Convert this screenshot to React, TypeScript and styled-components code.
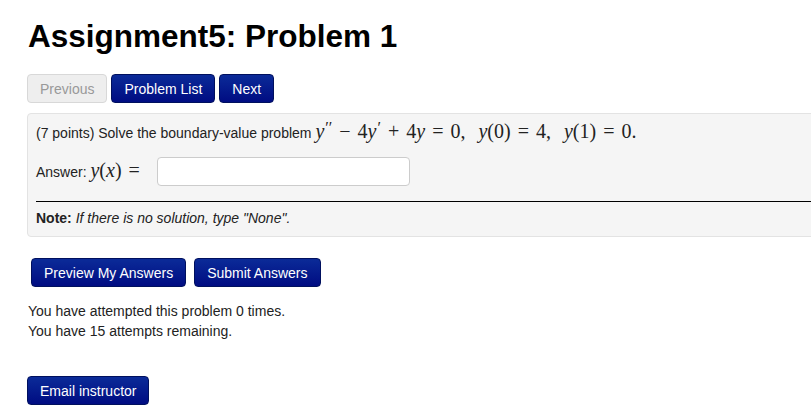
import React from 'react';
import styled, { createGlobalStyle } from 'styled-components';

const GlobalStyle = createGlobalStyle`
  html, body {
    margin: 0;
    padding: 0;
    overflow: hidden;
    background: #fff;
  }
  body {
    font-family: "Liberation Sans", Arial, sans-serif;
    font-size: 14px;
    line-height: 20px;
    color: #222;
  }
`;

const Page = styled.div`
  padding: 16px 0 0 27px;
  width: 900px;
`;

const Title = styled.h2`
  margin: 0 0 18px 1px;
  font-size: 31.5px;
  line-height: 40px;
  font-weight: bold;
  color: #000;
`;

const ButtonRow = styled.div<{ $indent?: number }>`
  display: flex;
  gap: ${(p) => (p.$indent ? 8 : 4)}px;
  margin-left: ${(p) => p.$indent || 0}px;
`;

const Button = styled.button<{ $disabled?: boolean }>`
  height: 29px;
  padding: 0 12px;
  border-radius: 4px;
  font-family: "Liberation Sans", Arial, sans-serif;
  font-size: 14px;
  line-height: 20px;
  cursor: pointer;
  border: 1px solid ${(p) => (p.$disabled ? '#d8d8d8' : '#00105e')};
  color: ${(p) => (p.$disabled ? '#999' : '#fff')};
  background: ${(p) =>
    p.$disabled ? '#eeeeee' : 'linear-gradient(to bottom, #0b2b98, #000c82)'};
`;

const ProblemBox = styled.div`
  margin-top: 10px;
  padding: 9px 8px 8px 8px;
  background: #f5f5f5;
  border: 1px solid #e3e3e3;
  border-radius: 4px;
`;

const Line = styled.p`
  margin: 0;
  height: 20px;
  line-height: 20px;
`;

const Math = styled.span`
  font-family: "Liberation Serif", "Times New Roman", serif;
  font-size: 20px;
  line-height: 0;
`;

const V = styled.i`
  font-style: italic;
`;

const Op = styled.span`
  margin: 0 7px;
`;

const Sep = styled.span`
  margin-right: 13px;
`;

const Prime = styled.sup`
  font-size: 16px;
  line-height: 0;
  vertical-align: 5px;
  margin-left: 1px;
`;

const AnswerRow = styled.div`
  display: flex;
  align-items: center;
  margin-top: 14px;
  gap: 10px;
`;

const AnswerLabel = styled.span`
  line-height: 20px;
`;

const AnswerInput = styled.input`
  box-sizing: border-box;
  width: 253px;
  height: 29px;
  border: 1px solid #cccccc;
  border-radius: 4px;
  background: #fff;
  padding: 4px 6px;
  font-size: 14px;
`;

const Rule = styled.hr`
  margin: 15px 0 6px 0;
  border: none;
  border-top: 1px solid #000;
  height: 0;
`;

const Note = styled.p`
  margin: 0;
  line-height: 20px;
  em {
    font-style: italic;
  }
`;

const SubmitArea = styled.div`
  margin-top: 21px;
`;

const Attempts = styled.div`
  margin: 14px 0 35px 1px;
  line-height: 20px;
`;

export default function App() {
  return (
    <>
      <GlobalStyle />
      <Page>
        <Title>Assignment5: Problem 1</Title>
        <ButtonRow>
          <Button $disabled>Previous</Button>
          <Button>Problem List</Button>
          <Button>Next</Button>
        </ButtonRow>
        <ProblemBox>
          <Line>
            (7 points) Solve the boundary-value problem{' '}
            <Math>
              <V>y</V>
              <Prime>′′</Prime>
              <Op>−</Op>4<V>y</V>
              <Prime>′</Prime>
              <Op>+</Op>4<V>y</V>
              <Op>=</Op>0,<Sep />
              <V>y</V>(0)
              <Op>=</Op>4,<Sep />
              <V>y</V>(1)
              <Op>=</Op>0.
            </Math>
          </Line>
          <AnswerRow>
            <AnswerLabel>
              Answer:{' '}
              <Math>
                <V>y</V>(<V>x</V>)<Op>=</Op>
              </Math>
            </AnswerLabel>
            <AnswerInput type="text" />
          </AnswerRow>
          <Rule />
          <Note>
            <b>Note:</b> <em>If there is no solution, type "None".</em>
          </Note>
        </ProblemBox>
        <SubmitArea>
          <ButtonRow $indent={4}>
            <Button>Preview My Answers</Button>
            <Button>Submit Answers</Button>
          </ButtonRow>
          <Attempts>
            You have attempted this problem 0 times.
            <br />
            You have 15 attempts remaining.
          </Attempts>
          <Button>Email instructor</Button>
        </SubmitArea>
      </Page>
    </>
  );
}
